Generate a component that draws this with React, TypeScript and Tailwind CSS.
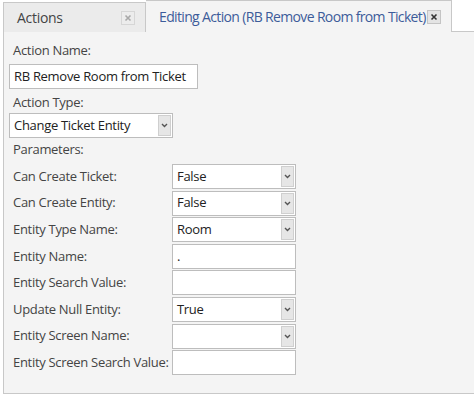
import React from 'react';

const FONT = { fontFamily: '"Open Sans", "Noto Sans", sans-serif' };

function CloseBox({ dim }: { dim?: boolean }) {
  return (
    <span
      className={`flex h-[14px] w-[14px] shrink-0 items-center justify-center border ${dim ? 'border-[#d6d6d6] bg-[#ececec]' : 'border-[#c4c4c4] bg-[#e4e4e4]'}`}
    >
      <svg width="8" height="8" viewBox="0 0 8 8">
        <path d="M1.5 1.5 L6.5 6.5 M6.5 1.5 L1.5 6.5" stroke={dim ? '#a8a8a8' : '#333'} strokeWidth="1.6" />
      </svg>
    </span>
  );
}

function Select({ value, width }: { value: string; width: string }) {
  return (
    <div className={`flex h-[25px] ${width} items-stretch border border-[#bdbdbd] bg-white`}>
      <div className="flex flex-1 items-center whitespace-nowrap pl-[4px] text-[13px] tracking-[-0.3px] text-[#222]">{value}</div>
      <div className="my-[1px] mr-[1px] flex w-[13px] items-center justify-center border border-[#cfcfcf] bg-[#e6e6e6]">
        <svg width="7" height="5" viewBox="0 0 7 5">
          <path d="M1 1 L3.5 3.5 L6 1" fill="none" stroke="#555" strokeWidth="1.4" />
        </svg>
      </div>
    </div>
  );
}

function TextBox({ value, width }: { value: string; width: string }) {
  return (
    <div className={`flex h-[25px] ${width} items-center whitespace-nowrap border border-[#bdbdbd] bg-white pl-[4px] text-[13px] tracking-[-0.3px] text-[#222]`}>
      {value}
    </div>
  );
}

const params: { label: string; kind: 'select' | 'text'; value: string }[] = [
  { label: 'Can Create Ticket:', kind: 'select', value: 'False' },
  { label: 'Can Create Entity:', kind: 'select', value: 'False' },
  { label: 'Entity Type Name:', kind: 'select', value: 'Room' },
  { label: 'Entity Name:', kind: 'text', value: '.' },
  { label: 'Entity Search Value:', kind: 'text', value: '' },
  { label: 'Update Null Entity:', kind: 'select', value: 'True' },
  { label: 'Entity Screen Name:', kind: 'select', value: '' },
  { label: 'Entity Screen Search Value:', kind: 'text', value: '' },
];

export default function App() {
  return (
    <div className="h-[398px] w-[474px] overflow-hidden bg-white" style={FONT}>
      {/* tab strip */}
      <div className="flex h-[32px] items-end pl-[3px]">
        <div className="flex h-[30px] w-[143px] items-center justify-between border border-b-0 border-[#c8c8c8] bg-[#ebebeb] pl-[13px] pr-[10px]">
          <span className="whitespace-nowrap text-[14px] tracking-[-0.3px] text-[#444]">Actions</span>
          <CloseBox dim />
        </div>
        <div className="flex h-[32px] w-[306px] items-center justify-between border-t border-r border-[#c8c8c8] bg-[#f4f4f4] pl-[13px] pr-[10px]">
          <span className="whitespace-nowrap text-[14px] tracking-[-0.65px] text-[#3d5c9a]">Editing Action (RB Remove Room from Ticket)</span>
          <CloseBox />
        </div>
        <div className="h-[32px] flex-1 border-b border-[#c8c8c8]" />
      </div>

      {/* content */}
      <div className="ml-[3px] h-[362px] whitespace-nowrap border-l border-b border-[#c8c8c8] bg-[#f4f4f4] pl-[5px] pt-[8px] text-[13px] tracking-[-0.3px] text-[#444]">
        <div className="pl-[4px] leading-[20px]">Action Name:</div>
        <div className="mt-[4px]">
          <TextBox value="RB Remove Room from Ticket" width="w-[189px]" />
        </div>
        <div className="mt-[2px] pl-[4px] leading-[22px]">Action Type:</div>
        <Select value="Change Ticket Entity" width="w-[164px]" />
        <div className="pl-[4px] leading-[22px]">Parameters:</div>
        <div className="mt-[4px] flex flex-col gap-[1.6px]">
          {params.map((p) => (
            <div key={p.label} className="flex items-center">
              <div className="w-[163px] pl-[4px]">{p.label}</div>
              {p.kind === 'select' ? (
                <Select value={p.value} width="w-[124px]" />
              ) : (
                <TextBox value={p.value} width="w-[124px]" />
              )}
            </div>
          ))}
        </div>
      </div>
    </div>
  );
}
